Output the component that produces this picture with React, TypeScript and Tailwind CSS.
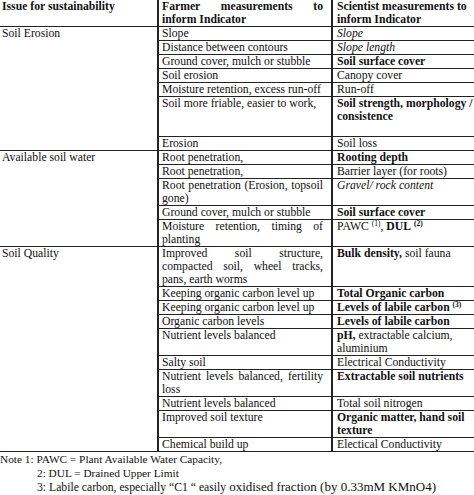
import type { ReactNode } from "react";

type Row = { farmer: ReactNode; sci: ReactNode; lines?: number };
type Group = { issue: string; rows: Row[] };

const B = ({ children }: { children: ReactNode }) => <b className="font-bold">{children}</b>;
const I = ({ children }: { children: ReactNode }) => <i className="italic">{children}</i>;
const Sup = ({ children }: { children: ReactNode }) => (
  <sup className="relative -top-[4px] align-baseline text-[7.5px] leading-none">{children}</sup>
);

const groups: Group[] = [
  {
    issue: "Soil Erosion",
    rows: [
      { farmer: "Slope", sci: <I>Slope</I> },
      { farmer: "Distance between contours", sci: <I>Slope length</I> },
      { farmer: "Ground cover, mulch or stubble", sci: <B>Soil surface cover</B> },
      { farmer: "Soil erosion", sci: "Canopy cover" },
      { farmer: "Moisture retention, excess run-off", sci: "Run-off" },
      {
        farmer: "Soil more friable, easier to work,",
        sci: <B>Soil strength, morphology / consistence</B>,
        lines: 3,
      },
      { farmer: "Erosion", sci: "Soil loss" },
    ],
  },
  {
    issue: "Available soil water",
    rows: [
      { farmer: "Root penetration,", sci: <B>Rooting depth</B> },
      { farmer: "Root penetration,", sci: "Barrier layer (for roots)" },
      { farmer: "Root penetration (Erosion, topsoil gone)", sci: <I>Gravel/ rock content</I> },
      { farmer: "Ground cover, mulch or stubble", sci: <B>Soil surface cover</B> },
      {
        farmer: "Moisture retention, timing of planting",
        sci: (
          <>
            PAWC <Sup>(1)</Sup>, <B>DUL</B> <B><Sup>(2)</Sup></B>
          </>
        ),
      },
    ],
  },
  {
    issue: "Soil Quality",
    rows: [
      {
        farmer: "Improved soil structure, compacted soil, wheel tracks, pans, earth worms",
        sci: (
          <>
            <B>Bulk density,</B> soil fauna
          </>
        ),
      },
      { farmer: "Keeping organic carbon level up", sci: <B>Total Organic carbon</B> },
      {
        farmer: "Keeping organic carbon level up",
        sci: (
          <B>
            Levels of labile carbon <Sup>(3)</Sup>
          </B>
        ),
      },
      { farmer: "Organic carbon levels", sci: <B>Levels of labile carbon</B> },
      {
        farmer: "Nutrient levels balanced",
        sci: (
          <>
            <B>pH,</B> extractable calcium, aluminium
          </>
        ),
      },
      { farmer: "Salty soil", sci: "Electrical Conductivity" },
      { farmer: "Nutrient levels balanced, fertility loss", sci: <B>Extractable soil nutrients</B> },
      { farmer: "Nutrient levels balanced", sci: "Total soil nitrogen" },
      { farmer: "Improved soil texture", sci: <B>Organic matter, hand soil texture</B> },
      { farmer: "Chemical build up", sci: "Electical Conductivity" },
    ],
  },
];

export default function App() {
  return (
    <div className="h-[495px] w-[474px] overflow-hidden bg-white font-['Liberation_Serif','Times_New_Roman',serif] text-[11.7px] leading-[13px] text-[#111]">
      <table className="w-[502px] table-fixed border-collapse">
        <colgroup>
          <col className="w-[158px]" />
          <col className="w-[174px]" />
          <col className="w-[170px]" />
        </colgroup>
        <thead>
          <tr className="border-b border-[#222] align-top font-bold">
            <th className="border-r-2 border-[#222] pl-[2px] text-left font-bold">Issue for sustainability</th>
            <th className="border-r-2 border-[#222] pl-[3px] pr-[8px] text-justify font-bold">
              Farmer measurements to inform Indicator
            </th>
            <th className="pl-[4px] text-left font-bold">Scientist measurements to inform Indicator</th>
          </tr>
        </thead>
        <tbody>
          {groups.map((g) =>
            g.rows.map((r, i) => (
              <tr key={g.issue + i} className="align-top">
                {i === 0 && (
                  <td rowSpan={g.rows.length} className="border-r-2 border-b border-[#222] pl-[2px]">
                    {g.issue}
                  </td>
                )}
                <td
                  className={
                    "border-r-2 border-b border-[#222] pl-[3px] pr-[8px] text-justify " +
                    (r.lines === 3 ? "h-[40px]" : "")
                  }
                >
                  {r.farmer}
                </td>
                <td className="border-b border-[#222] pl-[4px]">{r.sci}</td>
              </tr>
            ))
          )}
        </tbody>
      </table>
      <div className="leading-[14px]">
        <p className="text-[11.3px]">Note 1: PAWC = Plant Available Water Capacity,</p>
        <p className="pl-[37px] text-[11.3px]">2: DUL = Drained Upper Limit</p>
        <p className="whitespace-nowrap pl-[37px] leading-[14px]">
          3: Labile carbon, especially “C1 “ easily{" "}
          <span className="text-[13px] leading-[13px]">oxidised fraction (by 0.33mM KMnO4)</span>
        </p>
      </div>
    </div>
  );
}
